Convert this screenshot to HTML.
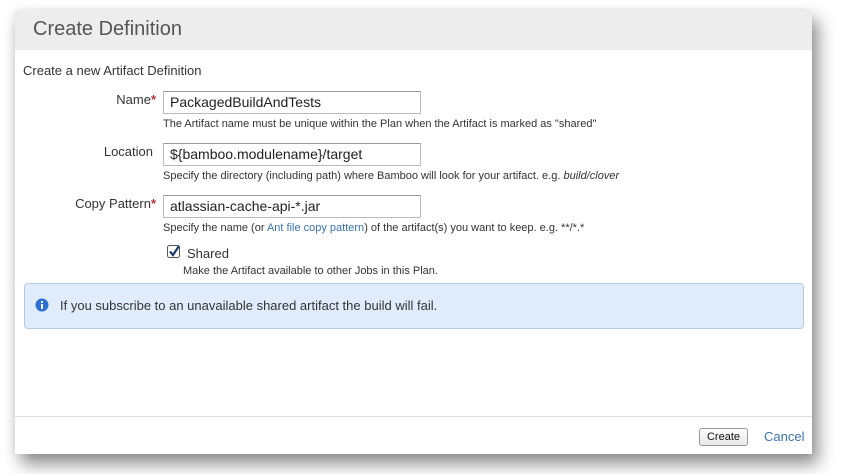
<!DOCTYPE html>
<html><head><style>
body{margin:0;width:846px;height:474px;background:#fff;position:relative;overflow:hidden;font-family:"Liberation Sans",Arial,sans-serif;}
.dlg{position:absolute;left:15px;top:10px;width:797px;height:444px;background:#fff;box-shadow:6px 10px 16px rgba(0,0,0,.45),-2px 0 8px rgba(0,0,0,.06);}
.hd{height:40px;background:#ededed;}
.hd span{position:absolute;left:18px;top:8px;font-size:20px;color:#555;}
.t{position:absolute;font-size:13px;color:#333;}
.lbl{position:absolute;right:0;font-size:13px;color:#333;text-align:right;}
.req{color:#a33;font-weight:bold;}
.in{position:absolute;left:148px;width:250px;height:21px;border:1px solid #bbb;border-top-color:#999;font-size:14px;color:#222;line-height:21px;padding-left:6px;box-sizing:content-box;}
.help{position:absolute;left:148px;font-size:11px;color:#333;}
a{color:#3b73af;text-decoration:none;}
.info{position:absolute;left:9px;top:273px;width:778px;height:44px;background:#e0ecfb;border:1px solid #b7c9dd;border-radius:4px;}
.foot{position:absolute;left:0;right:0;top:406px;border-top:1px solid #ddd;}
.btn{position:absolute;left:684px;top:418px;width:47px;height:16px;border:1px solid #999;border-radius:3px;background:linear-gradient(#fff,#e6e6e6);font-size:11px;text-align:center;line-height:16px;color:#111;}
</style></head><body>
<div class="dlg">
<div class="hd"><span>Create Definition</span></div>
<div class="t" style="left:8px;top:53px;">Create a new Artifact Definition</div>
<div style="position:absolute;left:0;width:141px;top:82px;height:20px;"><div class="lbl">Name<span class="req">*</span></div></div>
<div class="in" style="top:81px;">PackagedBuildAndTests</div>
<div class="help" style="top:108px;">The Artifact name must be unique within the Plan when the Artifact is marked as "shared"</div>
<div style="position:absolute;left:0;width:138px;top:134px;"><div class="lbl">Location</div></div>
<div class="in" style="top:133px;">${bamboo.modulename}/target</div>
<div class="help" style="top:160px;">Specify the directory (including path) where Bamboo will look for your artifact. e.g. <i>build/clover</i></div>
<div style="position:absolute;left:0;width:141px;top:186px;"><div class="lbl">Copy Pattern<span class="req">*</span></div></div>
<div class="in" style="top:185px;">atlassian-cache-api-*.jar</div>
<div class="help" style="top:212px;">Specify the name (or <a>Ant file copy pattern</a>) of the artifact(s) you want to keep. e.g. **/*.*</div>
<svg style="position:absolute;left:152px;top:235px" width="14" height="14"><rect x="0.5" y="0.5" width="12" height="12" rx="2" fill="#fff" stroke="#555"/><path d="M3 6.5 L6 10 L12 1" stroke="#1a3b6e" stroke-width="2.2" fill="none"/></svg>
<div class="t" style="left:172px;top:236px;">Shared</div>
<div class="help" style="left:168px;top:255px;">Make the Artifact available to other Jobs in this Plan.</div>
<div class="info">
<svg style="position:absolute;left:10px;top:14px" width="14" height="14"><circle cx="7" cy="7" r="6.5" fill="#2d6fd6"/><rect x="6" y="6" width="2" height="5" fill="#fff"/><circle cx="7" cy="4" r="1.1" fill="#fff"/></svg>
<div class="t" style="left:35px;top:14px;">If you subscribe to an unavailable shared artifact the build will fail.</div>
</div>
<div class="foot"></div>
<div class="btn">Create</div>
<div class="t" style="left:749px;top:419px;color:#3b73af;">Cancel</div>
</div>
</body></html>
